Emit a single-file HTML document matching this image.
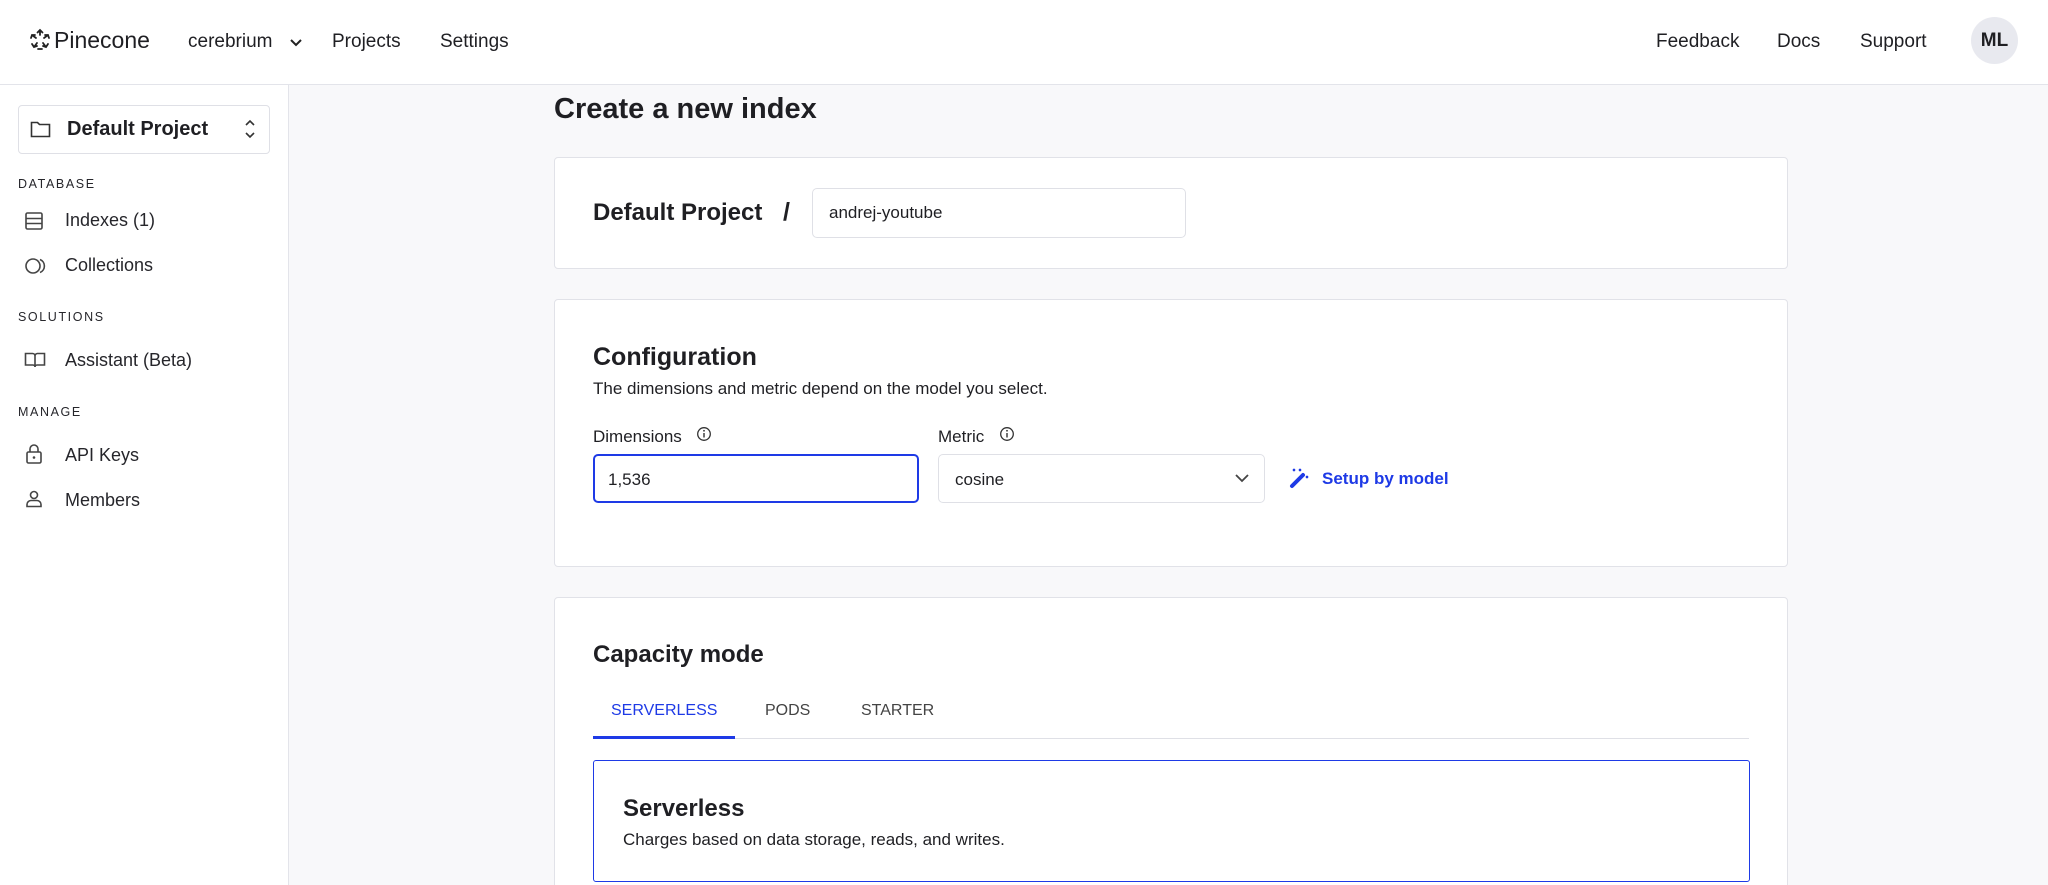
<!DOCTYPE html>
<html><head><meta charset="utf-8"><style>
*{box-sizing:border-box;margin:0;padding:0}
html,body{width:2048px;height:885px;overflow:hidden}
body{background:#f8f8fa;font-family:"Liberation Sans",sans-serif;color:#1f1f23;position:relative}
.abs{position:absolute}
.hdr{left:0;top:0;width:2048px;height:85px;background:#fff;border-bottom:1px solid #e3e4ea}
.nav{font-size:19px;color:#1f1f23;top:31px}
.side{left:0;top:85px;width:289px;height:800px;background:#fff;border-right:1px solid #e3e4ea}
.sec{font-size:12.5px;letter-spacing:1.6px;color:#26262b;left:18px}
.item{font-size:18px;left:65px;color:#26262b}
.ico{left:24px}
.card{background:#fff;border:1px solid #e1e2e8;border-radius:4px;left:554px;width:1234px}
.h{font-weight:bold}
.inp{border:1px solid #dfe0e6;border-radius:5px;background:#fff}
</style></head><body>
<div class="abs hdr"></div>
<svg class="abs" style="left:28px;top:28px" width="24" height="24" viewBox="0 0 24 24" fill="none" stroke="#222" stroke-width="1.8" stroke-linecap="round">
<path d="M12 2v5M9.5 4.5L12 2l2.5 2.5M4 7l4 3M3 10l1-3 3 0M20 7l-4 3M21 10l-1-3-3 0M6 19l3-4M4 16l2 3 3-1M18 19l-3-4M20 16l-2 3-3-1M10 21h4"/></svg>
<div class="abs" style="left:54px;top:27px;font-size:23px;color:#1f1f23">Pinecone</div>
<div class="abs nav" style="left:188px">cerebrium</div>
<svg class="abs" style="left:289px;top:38px" width="14" height="10" viewBox="0 0 14 10"><path d="M2 2l5 5 5-5" fill="none" stroke="#222" stroke-width="2"/></svg>
<div class="abs nav" style="left:332px">Projects</div>
<div class="abs nav" style="left:440px">Settings</div>
<div class="abs nav" style="left:1656px">Feedback</div>
<div class="abs nav" style="left:1777px">Docs</div>
<div class="abs nav" style="left:1860px">Support</div>
<div class="abs" style="left:1971px;top:17px;width:47px;height:47px;border-radius:50%;background:#e8e9ef;font-weight:bold;font-size:19px;line-height:47px;text-align:center">ML</div>

<div class="abs side"></div>
<div class="abs inp" style="left:18px;top:105px;width:252px;height:49px;border-radius:4px"></div>
<svg class="abs" style="left:30px;top:120px" width="21" height="18" viewBox="0 0 21 18"><path d="M1.5 2.5h6l2 2h10v12h-18z" fill="none" stroke="#333" stroke-width="1.6"/></svg>
<div class="abs h" style="left:67px;top:118px;font-size:20px">Default Project</div>
<svg class="abs" style="left:244px;top:118px" width="12" height="22" viewBox="0 0 12 22"><path d="M2 7l4-4 4 4M2 15l4 4 4-4" fill="none" stroke="#333" stroke-width="1.6"/></svg>
<div class="abs sec" style="top:177px">DATABASE</div>
<svg class="abs ico" style="top:211px" width="20" height="20" viewBox="0 0 20 20"><rect x="2" y="2" width="16" height="16" rx="1.5" fill="none" stroke="#444" stroke-width="1.6"/><path d="M2 7.5h16M2 12.5h16" stroke="#444" stroke-width="1.6"/></svg>
<div class="abs item" style="top:210px">Indexes (1)</div>
<svg class="abs ico" style="top:256px" width="22" height="20" viewBox="0 0 22 20"><circle cx="9" cy="10" r="7" fill="none" stroke="#444" stroke-width="1.6"/><path d="M16 3.5a7 7 0 0 1 0 13" fill="none" stroke="#444" stroke-width="1.6"/></svg>
<div class="abs item" style="top:255px">Collections</div>
<div class="abs sec" style="top:310px">SOLUTIONS</div>
<svg class="abs ico" style="top:351px" width="22" height="18" viewBox="0 0 22 18"><path d="M1.5 2.5h7a2.5 2.5 0 0 1 2.5 2.5v11a2 2 0 0 0-2-2h-7.5zM20.5 2.5h-7a2.5 2.5 0 0 0-2.5 2.5v11a2 2 0 0 1 2-2h7.5z" fill="none" stroke="#444" stroke-width="1.6"/></svg>
<div class="abs item" style="top:350px">Assistant (Beta)</div>
<div class="abs sec" style="top:405px">MANAGE</div>
<svg class="abs ico" style="top:443px" width="20" height="22" viewBox="0 0 20 22"><rect x="3" y="9" width="14" height="11" rx="1.5" fill="none" stroke="#444" stroke-width="1.6"/><path d="M6 9V6a4 4 0 0 1 8 0v3" fill="none" stroke="#444" stroke-width="1.6"/><circle cx="10" cy="14.5" r="1.3" fill="#444"/></svg>
<div class="abs item" style="top:445px">API Keys</div>
<svg class="abs ico" style="top:489px" width="20" height="20" viewBox="0 0 20 20"><circle cx="10" cy="6" r="3.5" fill="none" stroke="#444" stroke-width="1.6"/><path d="M3 17.5v-2a4 4 0 0 1 4-4h6a4 4 0 0 1 4 4v2z" fill="none" stroke="#444" stroke-width="1.6"/></svg>
<div class="abs item" style="top:490px">Members</div>

<div class="abs" style="left:554px;top:93px;font-size:29px;font-weight:bold">Create a new index</div>

<div class="abs card" style="top:157px;height:112px"></div>
<div class="abs h" style="left:593px;top:199px;font-size:24px">Default Project</div>
<div class="abs h" style="left:783px;top:198px;font-size:25px">/</div>
<div class="abs inp" style="left:812px;top:188px;width:374px;height:50px"></div>
<div class="abs" style="left:829px;top:203px;font-size:17px">andrej-youtube</div>

<div class="abs card" style="top:299px;height:268px"></div>
<div class="abs h" style="left:593px;top:343px;font-size:25px">Configuration</div>
<div class="abs" style="left:593px;top:379px;font-size:17px">The dimensions and metric depend on the model you select.</div>
<div class="abs" style="left:593px;top:427px;font-size:17px">Dimensions</div>
<svg class="abs" style="left:696px;top:426px" width="16" height="16" viewBox="0 0 16 16"><circle cx="8" cy="8" r="6.3" fill="none" stroke="#333" stroke-width="1.3"/><path d="M8 7v4.5" stroke="#333" stroke-width="1.4"/><circle cx="8" cy="4.8" r=".9" fill="#333"/></svg>
<div class="abs" style="left:938px;top:427px;font-size:17px">Metric</div>
<svg class="abs" style="left:999px;top:426px" width="16" height="16" viewBox="0 0 16 16"><circle cx="8" cy="8" r="6.3" fill="none" stroke="#333" stroke-width="1.3"/><path d="M8 7v4.5" stroke="#333" stroke-width="1.4"/><circle cx="8" cy="4.8" r=".9" fill="#333"/></svg>
<div class="abs" style="left:593px;top:454px;width:326px;height:49px;border:2.5px solid #1e3ae6;border-radius:5px;background:#fff"></div>
<div class="abs" style="left:608px;top:470px;font-size:17px">1,536</div>
<div class="abs inp" style="left:938px;top:454px;width:327px;height:49px"></div>
<div class="abs" style="left:955px;top:470px;font-size:17px">cosine</div>
<svg class="abs" style="left:1234px;top:473px" width="16" height="10" viewBox="0 0 16 10"><path d="M2 2l6 6 6-6" fill="none" stroke="#444" stroke-width="1.8"/></svg>
<svg class="abs" style="left:1289px;top:467px" width="22" height="22" viewBox="0 0 22 22"><path d="M3 19L14 8" stroke="#1e3ae6" stroke-width="4" stroke-linecap="round"/><path d="M4 2l2 2M6 2L4 4M10 2l2 2M12 2l-2 2M17 9l2 2M19 9l-2 2" stroke="#1e3ae6" stroke-width="1.3"/></svg>
<div class="abs h" style="left:1322px;top:469px;font-size:17px;color:#1e3ae6">Setup by model</div>

<div class="abs card" style="top:597px;height:292px"></div>
<div class="abs h" style="left:593px;top:641px;font-size:24px">Capacity mode</div>
<div class="abs" style="left:611px;top:702px;font-size:16px;color:#1e3ae6">SERVERLESS</div>
<div class="abs" style="left:765px;top:702px;font-size:16px;color:#444">PODS</div>
<div class="abs" style="left:861px;top:702px;font-size:16px;color:#444">STARTER</div>
<div class="abs" style="left:593px;top:738px;width:1156px;height:1px;background:#dfe0e6"></div>
<div class="abs" style="left:593px;top:736px;width:142px;height:3px;background:#1e3ae6"></div>
<div class="abs" style="left:593px;top:760px;width:1157px;height:122px;border:1.5px solid #1e3ae6;border-radius:3px;background:#fff"></div>
<div class="abs h" style="left:623px;top:795px;font-size:24px">Serverless</div>
<div class="abs" style="left:623px;top:830px;font-size:17px">Charges based on data storage, reads, and writes.</div>
</body></html>
